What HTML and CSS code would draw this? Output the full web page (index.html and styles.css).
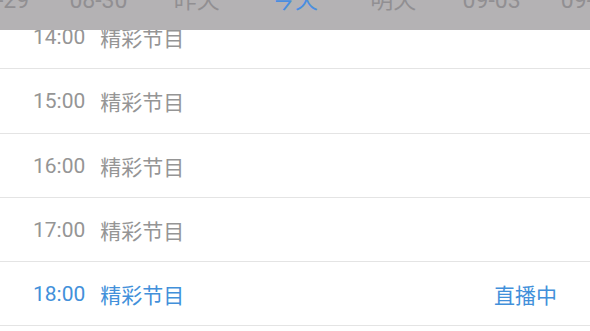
FILE: index.html
```html
<!DOCTYPE html>
<html lang="zh">
<head>
<meta charset="utf-8">
<title>节目单</title>
<link rel="stylesheet" href="styles.css">
</head>
<body>
<div class="page">
  <ul class="list">
    <li class="row"><span class="time">14:00</span><span class="title">精彩节目</span></li>
    <li class="row"><span class="time">15:00</span><span class="title">精彩节目</span></li>
    <li class="row"><span class="time">16:00</span><span class="title">精彩节目</span></li>
    <li class="row"><span class="time">17:00</span><span class="title">精彩节目</span></li>
    <li class="row live"><span class="time">18:00</span><span class="title">精彩节目</span><span class="status">直播中</span></li>
  </ul>
  <div class="mask">
    <div class="tabs">
      <span class="tab">08-29</span>
      <span class="tab">08-30</span>
      <span class="tab">昨天</span>
      <span class="tab active">今天</span>
      <span class="tab">明天</span>
      <span class="tab">09-03</span>
      <span class="tab">09-04</span>
    </div>
  </div>
</div>
</body>
</html>
```
FILE: styles.css
```css
html, body {
  margin: 0;
  padding: 0;
  background: #ffffff;
}
body {
  font-family: Roboto, "Noto Sans CJK SC", sans-serif;
  width: 590px;
  height: 331px;
  overflow: hidden;
}
.page {
  position: relative;
  width: 590px;
  height: 331px;
  overflow: hidden;
}
.list {
  list-style: none;
  margin: 5px 0 0 0;
  padding: 0;
}
.row {
  display: flex;
  align-items: center;
  box-sizing: border-box;
  height: 64.25px;
  border-bottom: 1px solid #e4e4e4;
  padding: 1px 33px 0 33px;
  font-size: 21px;
  color: #959595;
}
.time {
  margin-right: 15px;
}
.status {
  margin-left: auto;
}
.row.live {
  color: #4290da;
}
.mask {
  position: absolute;
  top: 0;
  left: 0;
  width: 590px;
  height: 30px;
  background: #b4b2b4;
  overflow: hidden;
  display: flex;
  justify-content: center;
  align-items: flex-start;
}
.tabs {
  display: flex;
  flex-shrink: 0;
  margin-top: -10px;
}
.tab {
  width: 98.3px;
  flex-shrink: 0;
  text-align: center;
  font-size: 23px;
  line-height: 22px;
  color: #918f92;
}
.tab.active {
  color: #4a8ee0;
}
```
